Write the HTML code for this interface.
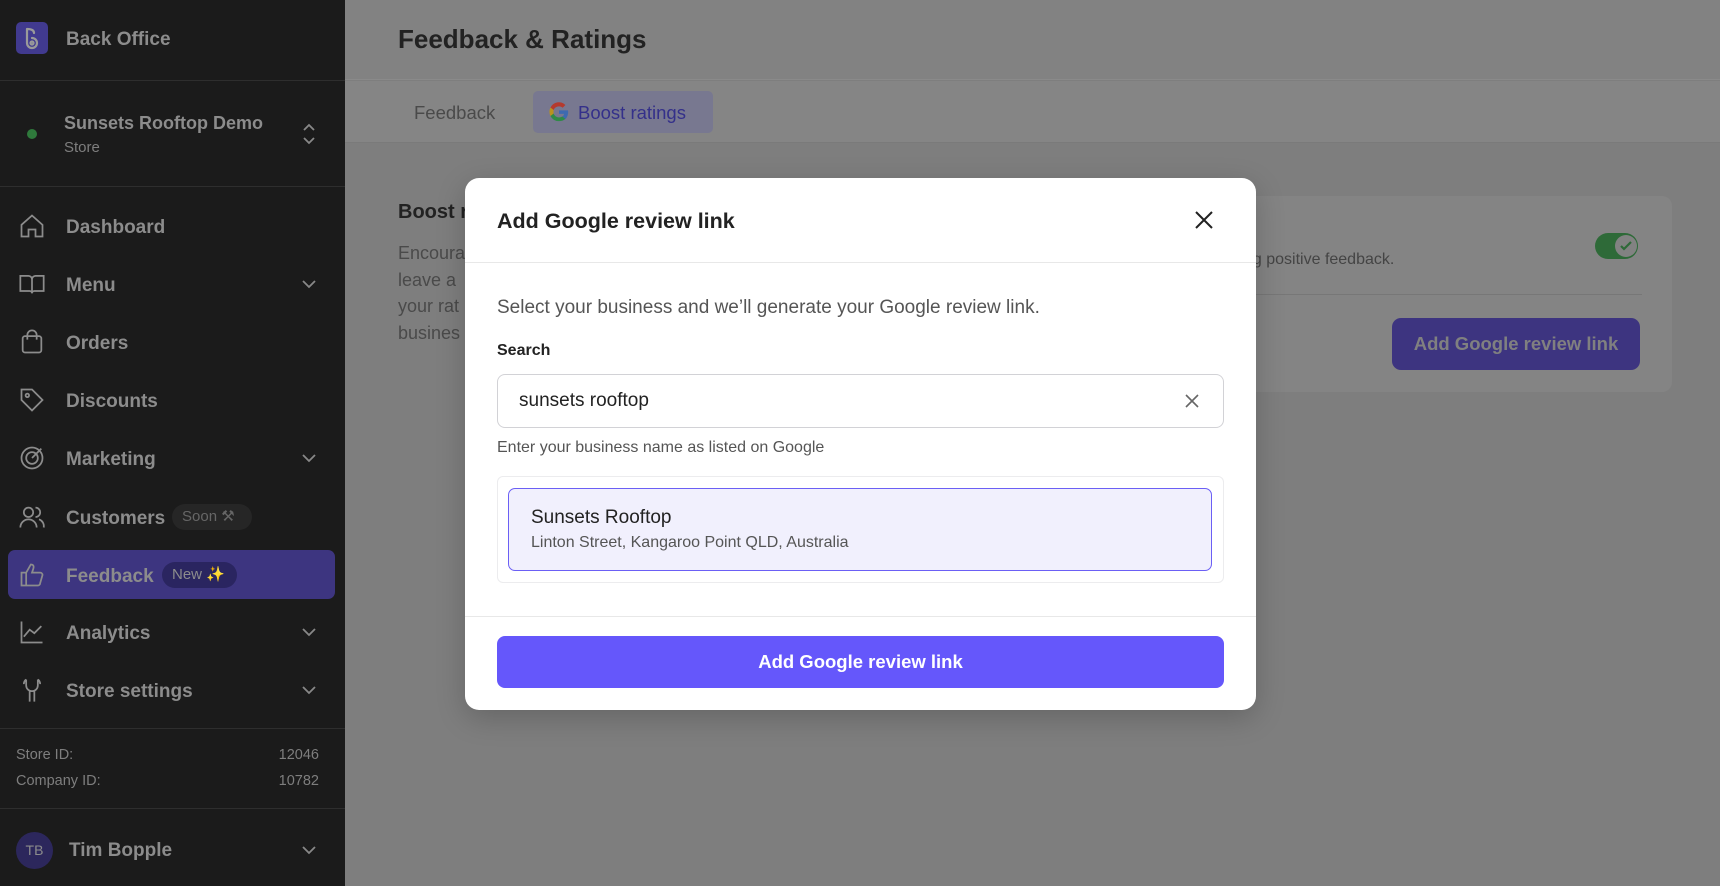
<!DOCTYPE html>
<html><head><meta charset="utf-8"><style>
*{box-sizing:border-box;margin:0;padding:0}
body{width:1720px;height:886px;overflow:hidden;font-family:"Liberation Sans",sans-serif;background:#7e7e7e;position:relative}
.abs{position:absolute}
.sb{left:0;top:0;width:345px;height:886px;background:#1b1b1b}
.hr{position:absolute;left:0;height:1px;background:#2e2e2e}
.nav{position:absolute;left:66px;font-size:19px;font-weight:bold;color:#8c8c8c;transform:translateY(-50%);margin-top:2px}
.ic{position:absolute;left:18px;width:28px;height:28px;transform:translateY(-50%)}
.chev{position:absolute;left:300px;width:18px;height:18px;transform:translateY(-50%)}
.mt{color:#555;font-size:19px}
</style></head><body>
<div class="abs sb"></div>
<div class="abs" style="left:16px;top:22px;width:32px;height:32px;background:#413a8f;border-radius:5px"></div>
<svg class="abs" style="left:16px;top:22px" width="32" height="32" viewBox="0 0 32 32" fill="none" stroke="#9a9a9a" stroke-width="2.2" stroke-linecap="round"><path d="M11 7v14a5 5 0 0 0 10 0a5 5 0 0 0-5-5M11 7c4 0 7 1 7 4"/><circle cx="16" cy="21" r="1.5"/></svg>
<div class="abs" style="left:66px;top:29px;font-size:19px;font-weight:bold;color:#8c8c8c">Back Office</div>
<div class="hr" style="top:80px;width:345px"></div>
<div class="abs" style="left:27px;top:129px;width:10px;height:10px;border-radius:50%;background:#2f7a3c"></div>
<div class="abs" style="left:64px;top:113px;font-size:18px;font-weight:bold;color:#8c8c8c">Sunsets Rooftop Demo</div>
<div class="abs" style="left:64px;top:139px;font-size:15px;color:#7e7e7e">Store</div>
<svg class="abs" style="left:301px;top:122px" width="16" height="24" viewBox="0 0 16 24" fill="none" stroke="#888" stroke-width="1.8"><path d="M3 8l5-5 5 5M3 16l5 5 5-5"/></svg>
<div class="hr" style="top:186px;width:345px"></div>
<div class="abs" style="left:8px;top:550px;width:327px;height:49px;background:#3d3580;border-radius:7px"></div>
<svg class="ic" style="top:226px" viewBox="0 0 24 24" fill="none" stroke="#8c8c8c" stroke-width="1.5"><path d="M3 11l9-8 9 8v10h-6v-6h-6v6H3z"/></svg>
<div class="nav" style="top:226px">Dashboard</div>
<svg class="ic" style="top:284px" viewBox="0 0 24 24" fill="none" stroke="#8c8c8c" stroke-width="1.5"><path d="M2 5h7a3 3 0 0 1 3 3v12a2 2 0 0 0-2-2H2zM22 5h-7a3 3 0 0 0-3 3v12a2 2 0 0 1 2-2h8z"/></svg>
<div class="nav" style="top:284px">Menu</div>
<svg class="ic" style="top:342px" viewBox="0 0 24 24" fill="none" stroke="#8c8c8c" stroke-width="1.5"><rect x="4" y="7" width="16" height="14" rx="2"/><path d="M8 10V6a4 4 0 0 1 8 0v4"/></svg>
<div class="nav" style="top:342px">Orders</div>
<svg class="ic" style="top:400px" viewBox="0 0 24 24" fill="none" stroke="#8c8c8c" stroke-width="1.5"><path d="M3 3h9l9 9-9 9-9-9z"/><circle cx="8" cy="8" r="1.5"/></svg>
<div class="nav" style="top:400px">Discounts</div>
<svg class="ic" style="top:458px" viewBox="0 0 24 24" fill="none" stroke="#8c8c8c" stroke-width="1.5"><circle cx="12" cy="12" r="9"/><circle cx="12" cy="12" r="5"/><path d="M12 12l8-8"/></svg>
<div class="nav" style="top:458px">Marketing</div>
<svg class="ic" style="top:517px" viewBox="0 0 24 24" fill="none" stroke="#8c8c8c" stroke-width="1.5"><circle cx="9" cy="8" r="4"/><path d="M2 21a7 7 0 0 1 14 0M15 4a4 4 0 0 1 0 8M18 14a6 6 0 0 1 4 7"/></svg>
<div class="nav" style="top:517px">Customers</div>
<div class="abs" style="left:172px;top:504px;width:80px;height:26px;border-radius:13px;background:#262626;color:#666;font-size:15px;line-height:26px;padding-left:10px">Soon ⚒</div>
<svg class="ic" style="top:575px" viewBox="0 0 24 24" fill="none" stroke="#8c8c8c" stroke-width="1.5"><path d="M3 10h4v11H3zM7 10l4-7c2 0 3 1 2 4l-1 3h7a2 2 0 0 1 2 2l-2 7a2 2 0 0 1-2 2H7"/></svg>
<div class="nav" style="top:575px">Feedback</div>
<div class="abs" style="left:162px;top:562px;width:75px;height:26px;border-radius:13px;background:#2a2560;color:#8c8c8c;font-size:15px;line-height:26px;padding-left:10px">New <span style="color:#a08a3a">✨</span></div>
<svg class="ic" style="top:632px" viewBox="0 0 24 24" fill="none" stroke="#8c8c8c" stroke-width="1.5"><path d="M3 3v18h18M5 16l5-6 4 3 6-6"/></svg>
<div class="nav" style="top:632px">Analytics</div>
<svg class="ic" style="top:690px" viewBox="0 0 24 24" fill="none" stroke="#8c8c8c" stroke-width="1.5"><path d="M7 3v5a5 5 0 0 0 10 0V3M10 13v9M14 13v9M7 3a5 5 0 0 0-2 4M17 3a5 5 0 0 1 2 4"/></svg>
<div class="nav" style="top:690px">Store settings</div>
<svg class="chev" style="top:284px" viewBox="0 0 18 18" fill="none" stroke="#888" stroke-width="1.8"><path d="M3 6l6 6 6-6"/></svg>
<svg class="chev" style="top:458px" viewBox="0 0 18 18" fill="none" stroke="#888" stroke-width="1.8"><path d="M3 6l6 6 6-6"/></svg>
<svg class="chev" style="top:632px" viewBox="0 0 18 18" fill="none" stroke="#888" stroke-width="1.8"><path d="M3 6l6 6 6-6"/></svg>
<svg class="chev" style="top:690px" viewBox="0 0 18 18" fill="none" stroke="#888" stroke-width="1.8"><path d="M3 6l6 6 6-6"/></svg>
<svg class="chev" style="top:850px" viewBox="0 0 18 18" fill="none" stroke="#888" stroke-width="1.8"><path d="M3 6l6 6 6-6"/></svg>
<div class="hr" style="top:728px;width:345px"></div>
<div class="abs" style="left:16px;top:747px;font-size:14.5px;color:#7e7e7e">Store ID:</div>
<div class="abs" style="left:270px;top:747px;width:49px;text-align:right;font-size:14.5px;color:#7e7e7e">12046</div>
<div class="abs" style="left:16px;top:773px;font-size:14.5px;color:#7e7e7e">Company ID:</div>
<div class="abs" style="left:270px;top:773px;width:49px;text-align:right;font-size:14.5px;color:#7e7e7e">10782</div>
<div class="hr" style="top:808px;width:345px"></div>
<div class="abs" style="left:16px;top:832px;width:37px;height:37px;border-radius:50%;background:#2c275c;color:#8c8c8c;font-size:14px;text-align:center;line-height:37px">TB</div>
<div class="abs" style="left:69px;top:840px;font-size:19px;font-weight:bold;color:#8c8c8c">Tim Bopple</div>
<div class="abs" style="left:345px;top:0;width:1375px;height:80px;background:#828282;border-bottom:1px solid #8a8a8a"></div>
<div class="abs" style="left:345px;top:81px;width:1375px;height:62px;background:#858585;border-bottom:1px solid #7a7a7a"></div>
<div class="abs" style="left:398px;top:24px;font-size:26px;font-weight:bold;color:#222">Feedback &amp; Ratings</div>
<div class="abs" style="left:414px;top:102px;font-size:18.5px;color:#4a4a4a">Feedback</div>
<div class="abs" style="left:533px;top:91px;width:180px;height:42px;border-radius:5px;background:#787890"></div>
<svg class="abs" style="left:548px;top:101px" width="22" height="22" viewBox="0 0 24 24"><path d="M22 12.2c0-.7-.1-1.4-.2-2H12v3.9h5.6a4.8 4.8 0 0 1-2.1 3.1v2.6h3.4c2-1.8 3.1-4.5 3.1-7.6z" fill="#3e6ab0"/><path d="M12 22c2.8 0 5.2-.9 6.9-2.5l-3.4-2.6c-.9.6-2.1 1-3.5 1-2.7 0-5-1.8-5.8-4.3H2.7v2.7A10 10 0 0 0 12 22z" fill="#2f8a48"/><path d="M6.2 13.6a6 6 0 0 1 0-3.8V7.1H2.7a10 10 0 0 0 0 9.2z" fill="#b89220"/><path d="M12 5.9c1.5 0 2.9.5 4 1.5l3-3A10 10 0 0 0 2.7 7.1l3.5 2.7C7 7.6 9.3 5.9 12 5.9z" fill="#b53a2e"/></svg>
<div class="abs" style="left:578px;top:102px;font-size:18.5px;color:#34308a">Boost ratings</div>
<div class="abs" style="left:398px;top:201px;font-size:20px;font-weight:bold;color:#222">Boost r</div>
<div class="abs" style="left:398px;top:240px;font-size:18px;line-height:26.5px;color:#4a4a4a">Encoura<br>leave a<br>your rat<br>busines</div>
<div class="abs" style="left:1228px;top:196px;width:444px;height:196px;border-radius:10px;background:#848484"></div>
<div class="abs" style="left:1244px;top:251px;font-size:16px;color:#444">ng positive feedback.</div>
<div class="abs" style="left:1595px;top:233px;width:43px;height:26px;border-radius:13px;background:#2e6a38"></div>
<div class="abs" style="left:1615px;top:235px;width:22px;height:22px;border-radius:50%;background:#828282"></div>
<svg class="abs" style="left:1618px;top:239px" width="16" height="14" viewBox="0 0 16 14" fill="none" stroke="#2e6a38" stroke-width="2.2"><path d="M3 7l3 3 7-7"/></svg>
<div class="abs" style="left:1244px;top:294px;width:398px;height:1px;background:#777"></div>
<div class="abs" style="left:1392px;top:318px;width:248px;height:52px;border-radius:9px;background:#3d3480;color:#808080;font-size:18.5px;font-weight:bold;text-align:center;line-height:52px">Add Google review link</div>
<div class="abs" style="left:465px;top:178px;width:791px;height:532px;background:#fff;border-radius:14px;box-shadow:0 8px 30px rgba(0,0,0,.2)"></div>
<div class="abs" style="left:497px;top:209px;font-size:21.5px;font-weight:bold;color:#222">Add Google review link</div>
<svg class="abs" style="left:1193px;top:209px" width="22" height="22" viewBox="0 0 22 22" stroke="#222" stroke-width="2"><path d="M3 3l16 16M19 3L3 19"/></svg>
<div class="abs" style="left:465px;top:262px;width:791px;height:1px;background:#e8e8e8"></div>
<div class="abs mt" style="left:497px;top:297px">Select your business and we’ll generate your Google review link.</div>
<div class="abs" style="left:497px;top:342px;font-size:16px;font-weight:bold;color:#222">Search</div>
<div class="abs" style="left:497px;top:374px;width:727px;height:54px;border:1.5px solid #d2d2d6;border-radius:8px"></div>
<div class="abs" style="left:519px;top:390px;font-size:19px;color:#222">sunsets rooftop</div>
<svg class="abs" style="left:1184px;top:393px" width="16" height="16" viewBox="0 0 16 16" stroke="#666" stroke-width="1.6"><path d="M2 2l12 12M14 2L2 14"/></svg>
<div class="abs" style="left:497px;top:439px;font-size:16px;color:#555">Enter your business name as listed on Google</div>
<div class="abs" style="left:497px;top:476px;width:727px;height:107px;border:1px solid #ececee;border-radius:6px"></div>
<div class="abs" style="left:508px;top:488px;width:704px;height:83px;border:1.5px solid #6b5ff5;border-radius:7px;background:#f1f0fd"></div>
<div class="abs" style="left:531px;top:507px;font-size:19px;color:#222">Sunsets Rooftop</div>
<div class="abs" style="left:531px;top:534px;font-size:16px;color:#555">Linton Street, Kangaroo Point QLD, Australia</div>
<div class="abs" style="left:465px;top:616px;width:791px;height:1px;background:#e8e8e8"></div>
<div class="abs" style="left:497px;top:636px;width:727px;height:52px;border-radius:8px;background:#6557fb;color:#fff;font-size:18.5px;font-weight:bold;text-align:center;line-height:52px">Add Google review link</div>
</body></html>
